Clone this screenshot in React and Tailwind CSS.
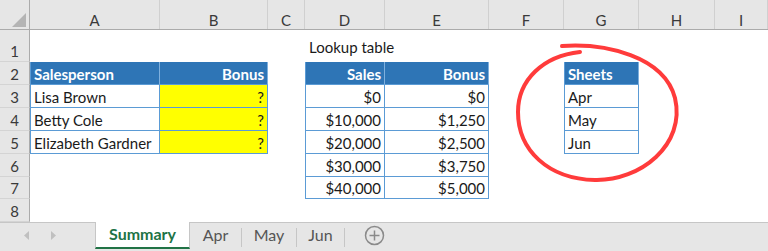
import React from "react";

const COLS = [130, 108, 37, 80, 104, 75, 75, 76, 53];
const LETTERS = ["A", "B", "C", "D", "E", "F", "G", "H", "I"];
const ROWS = [
  { n: 1, h: 32 },
  { n: 2, h: 23 },
  { n: 3, h: 23 },
  { n: 4, h: 23 },
  { n: 5, h: 23 },
  { n: 6, h: 23 },
  { n: 7, h: 22 },
  { n: 8, h: 23 },
];

const TABLES = [
  { r0: 2, r1: 5, c0: 0, c1: 1 },
  { r0: 2, r1: 7, c0: 3, c1: 4 },
  { r0: 2, r1: 5, c0: 6, c1: 6 },
];

const CELLS = {
  "1-3": { t: "Lookup table", a: "left", lookup: true },
  "2-0": { t: "Salesperson", a: "left" },
  "2-1": { t: "Bonus", a: "right" },
  "3-0": { t: "Lisa Brown", a: "left" },
  "4-0": { t: "Betty Cole", a: "left" },
  "5-0": { t: "Elizabeth Gardner", a: "left" },
  "3-1": { t: "?", a: "right", y: true },
  "4-1": { t: "?", a: "right", y: true },
  "5-1": { t: "?", a: "right", y: true },
  "2-3": { t: "Sales", a: "right" },
  "2-4": { t: "Bonus", a: "right" },
  "3-3": { t: "$0", a: "right" },
  "3-4": { t: "$0", a: "right" },
  "4-3": { t: "$10,000", a: "right" },
  "4-4": { t: "$1,250", a: "right" },
  "5-3": { t: "$20,000", a: "right" },
  "5-4": { t: "$2,500", a: "right" },
  "6-3": { t: "$30,000", a: "right" },
  "6-4": { t: "$3,750", a: "right" },
  "7-3": { t: "$40,000", a: "right" },
  "7-4": { t: "$5,000", a: "right" },
  "2-6": { t: "Sheets", a: "left" },
  "3-6": { t: "Apr", a: "left" },
  "4-6": { t: "May", a: "left" },
  "5-6": { t: "Jun", a: "left" },
};

function findTable(r, c) {
  return TABLES.find((t) => r >= t.r0 && r <= t.r1 && c >= t.c0 && c <= t.c1);
}

function Cell({ r, c, w }) {
  const d = CELLS[`${r}-${c}`];
  const tbl = findTable(r, c);
  let cls =
    "flex items-end shrink-0 whitespace-nowrap leading-[18px] text-[15px] px-[3px] pb-[1px] text-[#1a1a1a]";
  if (tbl) {
    cls += " border-r border-b border-[#5b9bd5]";
    if (c === tbl.c0) cls += " border-l";
    if (r === tbl.r0) cls += " bg-[#2e75b6] text-white font-bold border-r-[#7fb0de]";
    else if (d && d.y) cls += " bg-[#ffff00]";
    else cls += " bg-white";
  }
  if (d && d.a === "right") cls += " justify-end";
  if (d && d.lookup) cls += " overflow-visible pb-[6px] pl-[4px] z-10";
  else cls += " overflow-hidden";
  return (
    <div className={cls} style={{ width: w }}>
      {d ? <span>{d.t}</span> : null}
    </div>
  );
}

export default function App() {
  return (
    <div
      className="relative w-[768px] h-[251px] overflow-hidden bg-white flex flex-col"
      style={{ fontFamily: "Lato, 'Noto Sans', sans-serif" }}
    >
      {/* Column headers */}
      <div className="flex h-[30px] shrink-0 bg-[#e6e6e6] border-b border-[#ababab]">
        <div className="w-[30px] shrink-0 border-r border-[#ababab] relative">
          <svg className="absolute left-0 top-0" width="30" height="29">
            <polygon points="12,27 26,27 26,13" fill="#b4b4b4" />
          </svg>
        </div>
        {LETTERS.map((l, i) => (
          <div
            key={l}
            className="flex items-end justify-center shrink-0 border-r border-[#d0d0d0] text-[15px] leading-[18px] text-[#3a3a3a]"
            style={{ width: i === 0 ? COLS[0] : COLS[i] }}
          >
            {l}
          </div>
        ))}
      </div>

      {/* Rows */}
      {ROWS.map((row) => (
        <div key={row.n} className="flex shrink-0" style={{ height: row.h }}>
          <div className="w-[30px] shrink-0 flex items-end justify-center pb-[1px] bg-[#e6e6e6] border-r border-b border-r-[#ababab] border-b-[#d4d4d4] text-[15px] leading-[18px] text-[#3a3a3a]">
            {row.n}
          </div>
          {COLS.map((w, c) => (
            <Cell key={c} r={row.n} c={c} w={w} />
          ))}
        </div>
      ))}

      {/* Tab bar */}
      <div className="flex flex-1 bg-[#e6e6e6] border-t border-[#c6c6c6] text-[16px] leading-[20px]">
        <div className="w-[95px] shrink-0 flex items-center pb-[3px]">
          <svg width="95" height="20" className="block">
            <polygon points="29,5 29,14 24,9.5" fill="#c0c0c0" />
            <polygon points="51,5 51,14 56,9.5" fill="#c0c0c0" />
          </svg>
        </div>
        <div className="w-[95px] shrink-0 -mt-px h-[27px] bg-white border-x border-[#c6c6c6] border-b-2 border-b-[#217346] flex items-center justify-center pb-[2px] font-bold text-[#217346]">
          Summary
        </div>
        <div className="w-[51px] shrink-0 h-[26px] flex items-center justify-center pb-[3px] text-[#555]">
          Apr
        </div>
        <div className="w-px h-[19px] mt-[5px] bg-[#c6c6c6]" />
        <div className="w-[54px] shrink-0 h-[26px] flex items-center justify-center pb-[3px] text-[#555]">
          May
        </div>
        <div className="w-px h-[19px] mt-[5px] bg-[#c6c6c6]" />
        <div className="w-[47px] shrink-0 h-[26px] flex items-center justify-center pb-[3px] text-[#555]">
          Jun
        </div>
        <div className="w-px h-[19px] mt-[5px] bg-[#c6c6c6]" />
        <div className="w-[40px] shrink-0 h-[26px] flex items-center justify-end pb-[2px]">
          <svg width="21" height="21" viewBox="0 0 21 21">
            <circle cx="10.5" cy="10.5" r="9" fill="none" stroke="#8a8a8a" strokeWidth="1.5" />
            <path d="M10.5 5.5 V15.5 M5.5 10.5 H15.5" stroke="#8a8a8a" strokeWidth="1.5" />
          </svg>
        </div>
      </div>

      {/* Red hand-drawn circle overlay */}
      <svg
        className="absolute left-0 top-0 pointer-events-none z-20"
        width="768"
        height="251"
        viewBox="0 0 768 251"
      >
        <path
          d="M 562 46 C 605 43, 664 56, 675 98 C 686 145, 640 181, 595 180 C 548 179, 518 150, 518 112 C 518 80, 543 56, 580 52"
          fill="none"
          stroke="#ff3b3b"
          strokeWidth="4"
          strokeLinecap="round"
        />
      </svg>
    </div>
  );
}
